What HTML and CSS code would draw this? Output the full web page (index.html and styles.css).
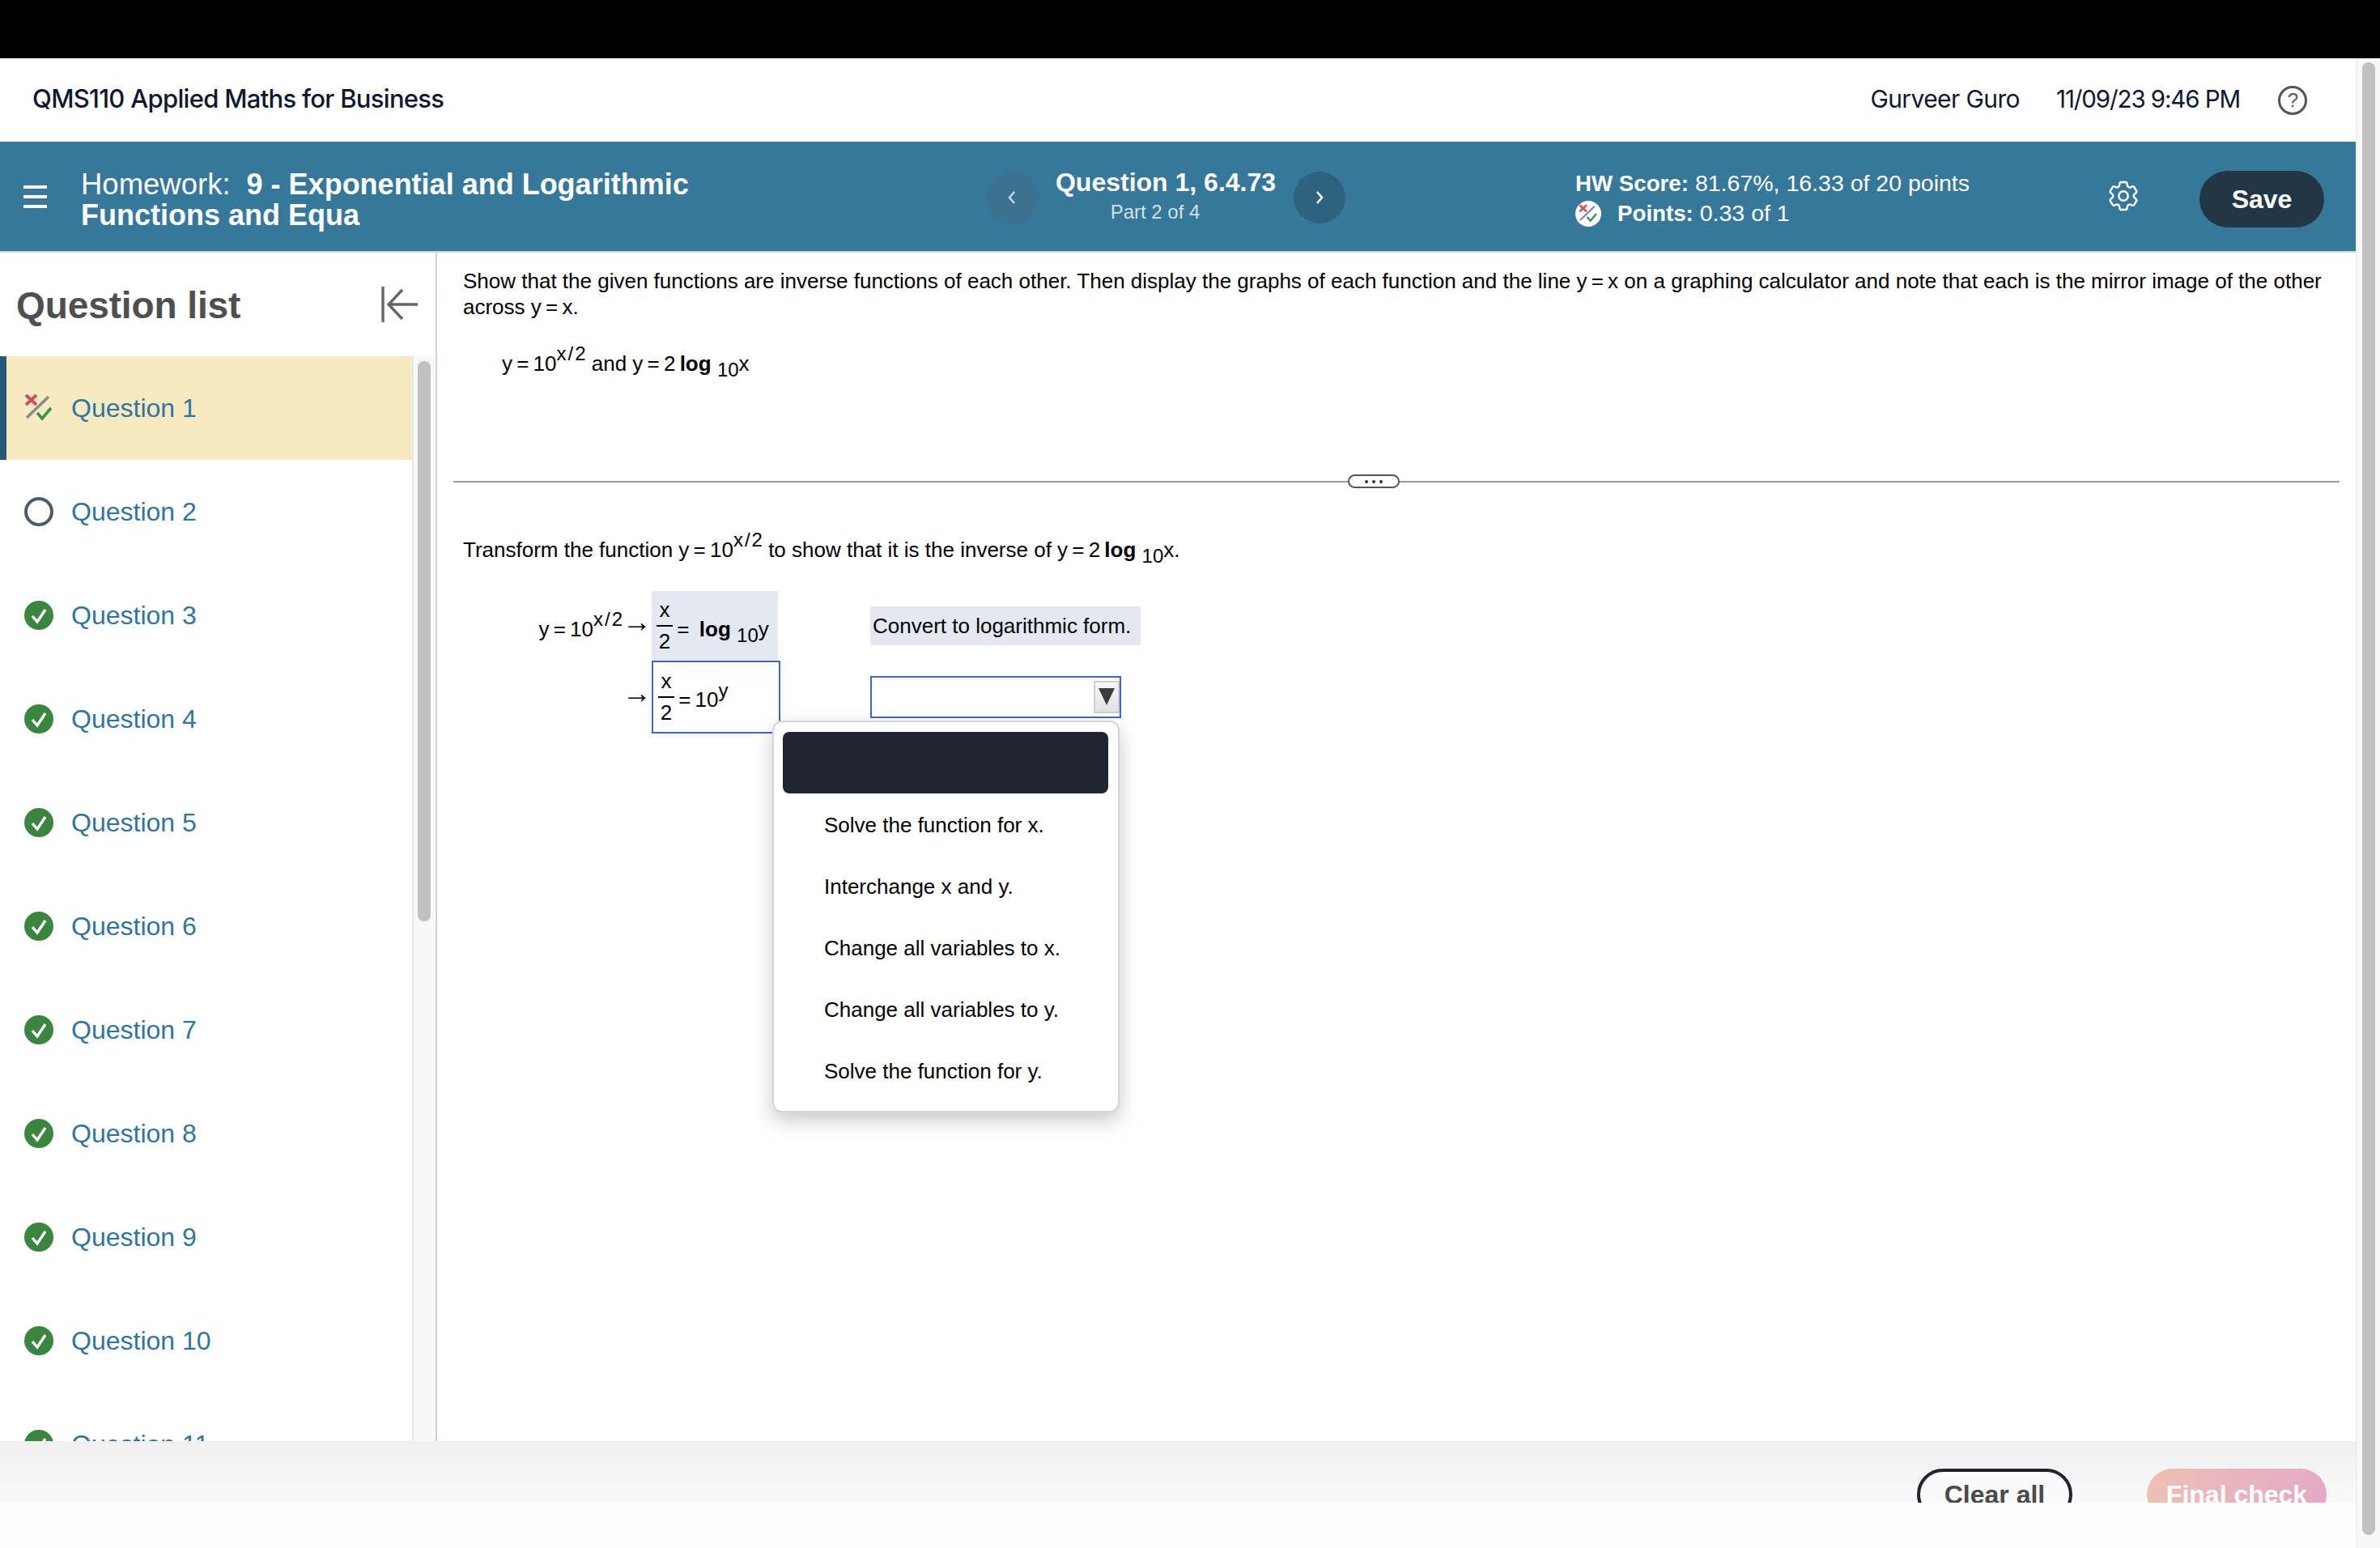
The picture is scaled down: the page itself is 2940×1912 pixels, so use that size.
FILE: index.html
```html
<!DOCTYPE html>
<html lang="en">
<head>
<meta charset="utf-8">
<title>QMS110 Homework</title>
<link rel="stylesheet" href="styles.css">
</head>
<body>
<svg class="defs" width="0" height="0" aria-hidden="true">
  <symbol id="ic-check" viewBox="0 0 36 36">
    <circle cx="18" cy="18" r="18" fill="#3c8541"/>
    <path d="M10 19l6 7 10-15" fill="none" stroke="#fff" stroke-width="3.4"/>
  </symbol>
  <symbol id="ic-partial" viewBox="0 0 36 36">
    <path d="M2 2l13 12M15 2L2 14" stroke="#c9555a" stroke-width="4" fill="none"/>
    <path d="M3 30L30 4" stroke="#8a8c8c" stroke-width="3.6" fill="none"/>
    <path d="M16 24l6 7 11-13" stroke="#3c8f4c" stroke-width="3.6" fill="none"/>
  </symbol>
</svg>
<div class="blackbar"></div>
<div class="stage">
  <div class="page">
    <header class="course">
      <div class="course-name">QMS110 Applied Maths for Business</div>
      <div class="course-meta">
        <span class="user">Gurveer Guro</span>
        <span class="date">11/09/23 9:46 PM</span>
        <svg class="help" viewBox="0 0 36 36"><circle cx="18" cy="18" r="16.5" fill="none" stroke="#555" stroke-width="3"/><text x="18" y="26" text-anchor="middle" class="help-q">?</text></svg>
      </div>
    </header>
    <section class="band">
      <div class="burger"><i></i><i></i><i></i></div>
      <div class="hw-title"><span class="hw-label">Homework:</span>&nbsp; <b>9 - Exponential and Logarithmic<br>Functions and Equa</b></div>
      <div class="qnav">
        <button class="circle prev"><svg viewBox="0 0 12 20" class="chev"><path d="M9 3L3 10l6 7" fill="none" stroke="#c4d6e0" stroke-width="2.6"/></svg></button>
        <div class="qnav-text"><div class="qnav-title">Question 1, 6.4.73</div><div class="qnav-part">Part 2 of 4</div></div>
        <button class="circle next"><svg viewBox="0 0 12 20" class="chev"><path d="M3 3l6 7-6 7" fill="none" stroke="#fff" stroke-width="2.6"/></svg></button>
      </div>
      <div class="score">
        <div class="score-line"><b>HW Score:</b> 81.67%, 16.33 of 20 points</div>
        <div class="score-line points"><span class="badge"><svg viewBox="0 0 36 36"><use href="#ic-partial"/></svg></span><span><b>Points:</b> 0.33 of 1</span></div>
      </div>
      <svg class="gear" viewBox="2.5 2.5 19 19" fill="none" stroke="#fff" stroke-width="1.3"><path d="M9.594 3.94c.09-.542.56-.94 1.11-.94h2.593c.55 0 1.02.398 1.11.94l.213 1.281c.063.374.313.686.645.87.074.04.147.083.22.127.325.196.72.257 1.075.124l1.217-.456a1.125 1.125 0 0 1 1.37.49l1.296 2.247a1.125 1.125 0 0 1-.26 1.431l-1.003.827c-.293.241-.438.613-.43.992a7.723 7.723 0 0 1 0 .255c-.008.378.137.75.43.991l1.004.827c.424.35.534.955.26 1.43l-1.298 2.247a1.125 1.125 0 0 1-1.369.491l-1.217-.456c-.355-.133-.75-.072-1.076.124a6.47 6.47 0 0 1-.22.128c-.331.183-.581.495-.644.869l-.213 1.281c-.09.543-.56.94-1.11.94h-2.594c-.55 0-1.019-.398-1.11-.94l-.213-1.281c-.062-.374-.312-.686-.644-.87a6.52 6.52 0 0 1-.22-.127c-.325-.196-.72-.257-1.076-.124l-1.217.456a1.125 1.125 0 0 1-1.369-.49l-1.297-2.247a1.125 1.125 0 0 1 .26-1.431l1.004-.827c.292-.24.437-.613.43-.991a6.932 6.932 0 0 1 0-.255c.007-.38-.138-.751-.43-.992l-1.004-.827a1.125 1.125 0 0 1-.26-1.43l1.297-2.247a1.125 1.125 0 0 1 1.37-.491l1.216.456c.356.133.751.072 1.076-.124.072-.044.146-.086.22-.128.332-.183.582-.495.644-.869l.214-1.28Z"/><circle cx="12" cy="12" r="3"/></svg>
      <button class="save">Save</button>
    </section>
    <div class="main">
      <aside class="side">
        <div class="side-head">
          <h2 class="side-title">Question list</h2>
          <svg class="collapse" viewBox="0 0 46 44" fill="none" stroke="#666" stroke-width="3.4"><path d="M2 0v44M45 22H10M26 4L9 22l17 18"/></svg>
        </div>
        <div class="side-body">
          <ul class="qlist">
            <li class="q current"><svg class="q-ic"><use href="#ic-partial"/></svg>Question 1</li>
            <li class="q"><span class="q-ring"></span>Question 2</li>
            <li class="q"><svg class="q-ic"><use href="#ic-check"/></svg>Question 3</li>
            <li class="q"><svg class="q-ic"><use href="#ic-check"/></svg>Question 4</li>
            <li class="q"><svg class="q-ic"><use href="#ic-check"/></svg>Question 5</li>
            <li class="q"><svg class="q-ic"><use href="#ic-check"/></svg>Question 6</li>
            <li class="q"><svg class="q-ic"><use href="#ic-check"/></svg>Question 7</li>
            <li class="q"><svg class="q-ic"><use href="#ic-check"/></svg>Question 8</li>
            <li class="q"><svg class="q-ic"><use href="#ic-check"/></svg>Question 9</li>
            <li class="q"><svg class="q-ic"><use href="#ic-check"/></svg>Question 10</li>
            <li class="q"><svg class="q-ic"><use href="#ic-check"/></svg>Question 11</li>
          </ul>
          <div class="side-track"><div class="side-thumb"></div></div>
        </div>
      </aside>
      <main class="work">
        <div class="prompt">
          <p class="txt">Show that the given functions are inverse functions of each other. Then display the graphs of each function and the line y&#8201;=&#8201;x on a graphing calculator and note that each is the mirror image of the other across y&#8201;=&#8201;x.</p>
          <p class="txt given">y&#8201;=&#8201;10<sup>x&#8202;/&#8202;2</sup> and y&#8201;=&#8201;2&#8201;<b>log</b> <sub>10</sub>x</p>
        </div>
        <div class="divider"><span class="grip"><i></i><i></i><i></i></span></div>
        <div class="answer">
          <p class="txt">Transform the function y&#8201;=&#8201;10<sup>x&#8202;/&#8202;2</sup> to show that it is the inverse of y&#8201;=&#8201;2&#8201;<b>log</b> <sub>10</sub>x.</p>
          <div class="steps">
            <div class="lhs first txt">y&#8201;=&#8201;10<sup>x&#8202;/&#8202;2</sup><span class="arrow">&#8594;</span></div>
            <div class="cell shaded txt"><span class="frac"><span>x</span><span>2</span></span><span class="expr log">&#8201;=&#8201; <b>log</b> <sub>10</sub>y</span></div>
            <div class="reason shaded txt">Convert to logarithmic form.</div>
            <div class="lhs txt"><span class="arrow">&#8594;</span></div>
            <div class="cell active txt"><span class="frac"><span>x</span><span>2</span></span><span class="expr pow">&#8201;=&#8201;10<sup class="ysup">y</sup></span></div>
            <div class="select">
              <span class="drop"><i></i></span>
              <div class="menu">
                <div class="opt selected"></div>
                <div class="opt">Solve the function for x.</div>
                <div class="opt">Interchange x and y.</div>
                <div class="opt">Change all variables to x.</div>
                <div class="opt">Change all variables to y.</div>
                <div class="opt">Solve the function for y.</div>
              </div>
            </div>
          </div>
        </div>
      </main>
    </div>
    <footer class="foot">
      <button class="btn clear">Clear all</button>
      <button class="btn final">Final check</button>
    </footer>
    <div class="under"></div>
  </div>
  <div class="pagebar"><div class="pagethumb"></div></div>
</div>
</body>
</html>
```

FILE: styles.css
```css
* { box-sizing: border-box; }
html, body { margin: 0; padding: 0; height: 100%; background: #fff; overflow: hidden; }
body { font-family: "Liberation Sans", Arial, sans-serif; color: #000; width: 2940px; height: 1912px; }
.defs { position: absolute; }
p, h2, ul { margin: 0; padding: 0; }
button { font-family: inherit; border: 0; padding: 0; }

.blackbar { height: 72px; background: #000; }
.stage { display: flex; height: 1840px; }
.page { width: 2910px; display: flex; flex-direction: column; }
.pagebar { width: 30px; background: #f8f8f8; border-left: 2px solid #eee; padding: 5px 6px 0 6px; }
.pagethumb { width: 16px; height: 1819px; background: #c1c1c1; border-radius: 8px; }

.course { height: 103px; display: flex; align-items: center; justify-content: space-between; padding: 0 60px 4px 40px; color: #0d1830; font-family: Inter, sans-serif; }
.course-name { font-size: 31px; font-weight: 500; letter-spacing: -0.7px; }
.course-meta { display: flex; align-items: center; font-size: 30px; letter-spacing: -0.6px; }
.date { margin-left: 45px; font-size: 29.5px; letter-spacing: -1.1px; }
.help { width: 36px; height: 36px; margin-left: 47px; margin-top: 4px; }
.help-q { font: 24px "Liberation Sans", sans-serif; fill: #555; }

.band { height: 137px; background: #36779a; border-bottom: 2px solid #ccd3dc; display: flex; align-items: center; color: #fff; position: relative; }
.burger { width: 29px; margin-left: 29px; display: flex; flex-direction: column; gap: 8px; }
.burger i { display: block; height: 4px; background: #fff; }
.hw-title { width: 770px; margin-left: 42px; font-size: 36px; line-height: 38px; margin-top: 8px; white-space: nowrap; }
.hw-label { font-size: 36.5px; }
.qnav { display: flex; align-items: center; margin-left: 348px; margin-top: 2px; }
.circle { width: 64px; height: 64px; border-radius: 50%; display: flex; align-items: center; justify-content: center; }
.prev { background: #3a7290; }
.next { background: #2e6380; }
.chev { width: 12px; height: 20px; }
.qnav-text { width: 316px; text-align: center; }
.qnav-title { font-size: 32px; font-weight: 700; line-height: 38px; margin-top: -2px; }
.qnav-part { font-size: 24px; line-height: 34px; color: #d5e1e8; padding-right: 26px; margin-top: 1px; }
.score { margin-left: 284px; width: 600px; font-size: 28.5px; line-height: 37px; margin-top: 5px; }
.score b { font-size: 27.7px; }
.points { display: flex; align-items: center; }
.badge { width: 32px; height: 32px; border-radius: 50%; background: #fff; display: flex; align-items: center; justify-content: center; margin-right: 20px; }
.badge svg { width: 24px; height: 24px; }
.gear { width: 36px; height: 38px; margin-left: 59px; margin-top: -2px; }
.save { width: 154px; height: 70px; border-radius: 35px; background: #233646; color: #fff; font-size: 32px; font-weight: 700; margin-left: 76px; margin-top: 7px; }

.main { height: 1468px; display: flex; overflow: hidden; }
.side { width: 540px; flex: none; border-right: 2px solid #ccd3da; display: flex; flex-direction: column; overflow: hidden; }
.side-head { height: 128px; display: flex; align-items: center; justify-content: space-between; padding: 2px 21px 0 20px; }
.side-title { font-size: 46px; font-weight: 700; color: #4f4f4f; letter-spacing: -0.1px; }
.collapse { width: 46px; height: 44px; margin-top: -2px; }
.side-body { flex: 1; display: flex; overflow: hidden; }
.qlist { width: 509px; list-style: none; }
.q { height: 128px; display: flex; align-items: center; padding-left: 30px; font-size: 32px; color: #33759a; }
.q.current { background: #f6eac3; box-shadow: inset 8px 0 0 #255a76; }
.q-ic { width: 36px; height: 36px; margin-right: 22px; flex: none; }
.q-ring { width: 36px; height: 36px; border-radius: 50%; border: 4px solid #4e5a68; margin-right: 22px; flex: none; }
.side-track { width: 29px; background: #f8f8f8; border-left: 2px solid #e6e6e6; padding: 6px 5px 0 5px; }
.side-thumb { width: 16px; height: 692px; background: #c1c1c1; border-radius: 8px; }

.work { flex: 1; min-width: 0; padding: 0 20px; }
.txt { font-size: 26px; line-height: 32px; }
.txt sup { font-size: 24px; line-height: 0; vertical-align: 13px; }
.txt sub { font-size: 24px; line-height: 0; vertical-align: -7px; }
.prompt { height: 274px; padding: 19px 0 0 12px; }
.given { margin: 38px 0 0 48px; }
.divider { height: 17px; position: relative; display: flex; justify-content: center; align-items: center; }
.divider::before { content: ""; position: absolute; left: 0; right: 0; top: 8px; height: 2px; background: #9a9a9a; }
.grip { position: relative; width: 64px; height: 17px; background: #fff; border: 2px solid #555; border-radius: 9px; display: flex; align-items: center; justify-content: center; gap: 5px; margin-right: 56px; }
.grip i { width: 4px; height: 4px; border-radius: 50%; background: #333; }
.answer { padding: 60px 0 0 12px; }
.steps { display: grid; grid-template-columns: 233px 159px 111px 334px; grid-template-rows: 86px 90px; margin-top: 35px; align-items: center; }
.lhs { grid-column: 1; text-align: right; white-space: nowrap; padding-right: 0; }
.lhs.first { padding-top: 7px; }
.arrow { font-size: 36px; line-height: 0; vertical-align: 2px; }
.first .arrow { vertical-align: 6px; }
.cell { grid-column: 2; display: flex; align-items: center; white-space: nowrap; }
.shaded { background: #e4e8f1; }
.cell.shaded { height: 86px; padding-left: 6px; width: 156px; }
.cell.active { height: 90px; border: 2px solid #3f66c8; padding-left: 6px; width: 159px; }
.frac { display: inline-flex; flex-direction: column; align-items: center; line-height: 37px; width: 20px; flex: none; }
.frac span:first-child { border-bottom: 2px solid #000; width: 100%; text-align: center; }
.expr { white-space: pre; }
.log { padding-top: 8px; }
.pow { padding-top: 5px; }
.txt .ysup { vertical-align: 12px; }
.reason { grid-column: 4; height: 48px; display: flex; align-items: center; padding-left: 3px; }
.select { grid-column: 4; height: 52px; width: 310px; border: 2px solid #3f66c8; position: relative; display: flex; justify-content: flex-end; align-items: center; }
.drop { width: 32px; height: 40px; background: linear-gradient(#f6f6f6, #e2e2e2); border: 2px solid #cfcfcf; display: flex; justify-content: center; align-items: flex-start; padding-top: 7px; }
.drop i { width: 0; height: 0; border-left: 10px solid transparent; border-right: 10px solid transparent; border-top: 21px solid #3c3c3c; }
.menu { position: absolute; left: -123px; top: 53px; width: 429px; height: 484px; background: #fff; border: 2px solid #d6d6d6; border-radius: 12px; box-shadow: 0 10px 24px rgba(0,0,0,.22); padding: 12px 12px 12px 11px; z-index: 5; font-size: 26px; }
.opt { height: 76px; display: flex; align-items: center; padding-left: 51px; padding-top: 2px; }
.opt.selected { background: #1f2430; border-radius: 8px; }

.foot { height: 76px; flex: none; background: linear-gradient(#f0f0f0, #f9f9f9); display: flex; justify-content: flex-end; gap: 92px; padding: 34px 36px 0 0; overflow: hidden; }
.btn { height: 64px; border-radius: 32px; font-size: 32px; font-weight: 700; flex: none; }
.clear { width: 192px; background: #fafafa; border: 4px solid #1f2430; color: #4a4a4a; }
.final { width: 222px; background: linear-gradient(100deg, #efc0b4, #e2a9c9); color: #fff; }
.under { flex: 1; background: #fdfdfd; }
```
